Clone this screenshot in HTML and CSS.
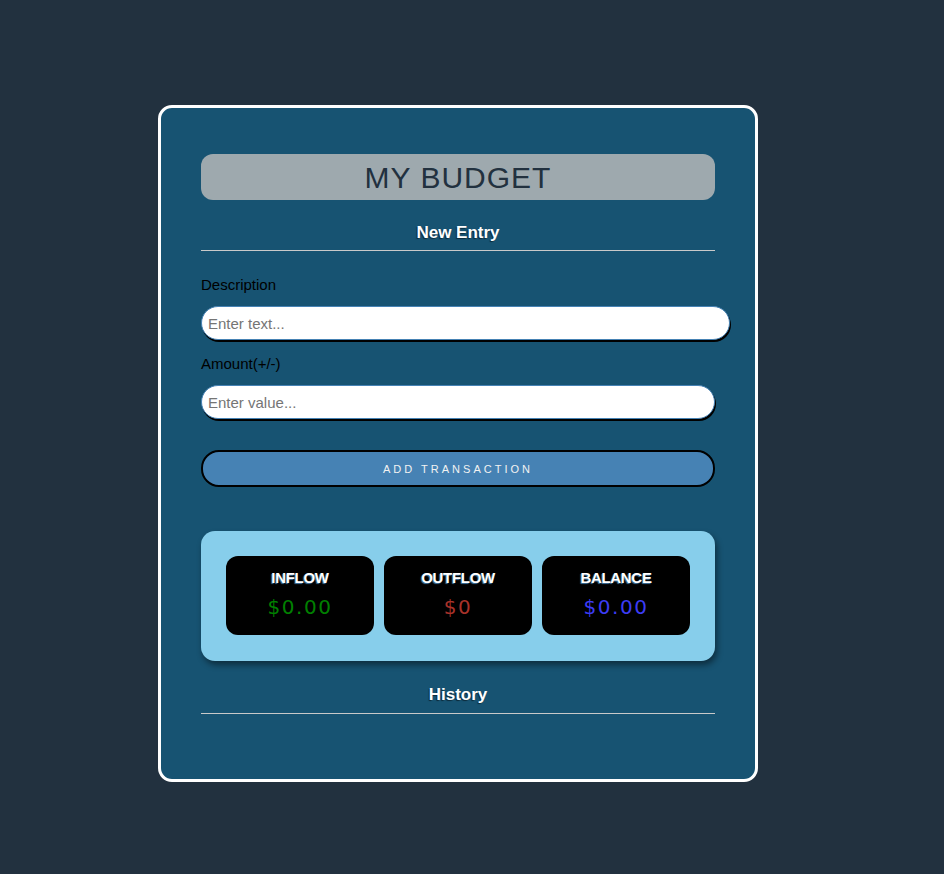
FILE: index.html
```html
<!DOCTYPE html>
<html lang="en">
<head>
<meta charset="utf-8">
<title>My Budget</title>
<link rel="stylesheet" href="styles.css">
</head>
<body>
<main class="card">
  <h1 class="title">MY BUDGET</h1>
  <h3 class="section-head first">New Entry</h3>
  <form class="entry">
    <label class="field-label first-label" for="desc">Description</label>
    <input class="field wide" id="desc" type="text" placeholder="Enter text...">
    <label class="field-label" for="amt">Amount(+/-)</label>
    <input class="field" id="amt" type="text" placeholder="Enter value...">
    <button class="add-btn" type="button">ADD TRANSACTION</button>
  </form>
  <section class="summary">
    <div class="stat">
      <div class="stat-label">INFLOW</div>
      <div class="stat-value inflow">$0.00</div>
    </div>
    <div class="stat">
      <div class="stat-label">OUTFLOW</div>
      <div class="stat-value outflow">$0</div>
    </div>
    <div class="stat">
      <div class="stat-label">BALANCE</div>
      <div class="stat-value balance">$0.00</div>
    </div>
  </section>
  <h3 class="section-head history">History</h3>
</main>
</body>
</html>
```
FILE: styles.css
```css
* { box-sizing: border-box; }
html, body { margin: 0; padding: 0; }
body {
  background: #22313f;
  font-family: "Liberation Sans", Arial, sans-serif;
  min-height: 874px;
  padding-top: 105px;
  padding-left: 158px;
}
.card {
  width: 600px;
  background: #175372;
  border: 3px solid #ffffff;
  border-radius: 14px;
  padding: 46px 40px 65px 40px;
}
.title {
  margin: 0;
  height: 46px;
  line-height: 47px;
  background: #9ea9ae;
  border-radius: 12px;
  text-align: center;
  color: #22313f;
  font-weight: 400;
  font-size: 30px;
  letter-spacing: 1px;
}
.section-head {
  margin: 22px 0 0 0;
  height: 29px;
  line-height: 22px;
  padding-bottom: 6px;
  border-bottom: 1px solid #c9c9c9;
  text-align: center;
  color: #ffffff;
  font-size: 17px;
  font-weight: 700;
  text-shadow: -1px 1px 1px rgba(0, 0, 0, 0.5);
}
.entry { display: flex; flex-direction: column; align-items: flex-start; }
.field-label {
  display: block;
  margin-top: 14px;
  height: 20px;
  line-height: 20px;
  font-size: 15px;
  color: #000000;
}
.first-label { margin-top: 24px; }
.field {
  margin-top: 11px;
  width: 514px;
  height: 34px;
  border: 1px solid #4682b4;
  border-radius: 17px;
  background: #ffffff;
  box-shadow: 1px 2px 0 #000000;
  padding: 0 6px;
  font-family: "Liberation Sans", Arial, sans-serif;
  font-size: 15px;
  color: #222;
  outline: none;
}
.field.wide { width: 529px; }
.field::placeholder { color: #757575; }
.add-btn {
  margin-top: 31px;
  width: 514px;
  height: 37px;
  background: #4682b4;
  border: 2px solid #000000;
  border-radius: 18px;
  color: #f2f2f2;
  font-family: "Liberation Sans", Arial, sans-serif;
  font-size: 11px;
  letter-spacing: 3px;
  padding: 0;
}
.summary {
  margin-top: 44px;
  height: 130px;
  background: #87ceeb;
  border-radius: 14px;
  box-shadow: 2px 4px 6px rgba(0, 0, 0, 0.45);
  padding: 25px 25px 26px 25px;
  display: grid;
  grid-template-columns: repeat(3, 148px);
  gap: 10px;
}
.stat {
  background: #000000;
  border-radius: 12px;
  height: 79px;
  display: flex;
  flex-direction: column;
  align-items: center;
  padding-top: 12px;
}
.stat-label {
  color: #ffffff;
  font-weight: 700;
  font-size: 15px;
  line-height: 20px;
  letter-spacing: -0.3px;
  text-shadow: -1px 1px 1px rgba(70, 130, 180, 0.9);
}
.stat-value {
  margin-top: 7px;
  font-family: "DejaVu Sans", sans-serif;
  font-size: 20px;
  line-height: 24px;
  letter-spacing: 1.5px;
}
.inflow { color: #008000; }
.outflow { color: #a8322a; }
.balance { color: #3c3cf5; }
.history { margin-top: 23px; height: 30px; padding-bottom: 7px; }
```
